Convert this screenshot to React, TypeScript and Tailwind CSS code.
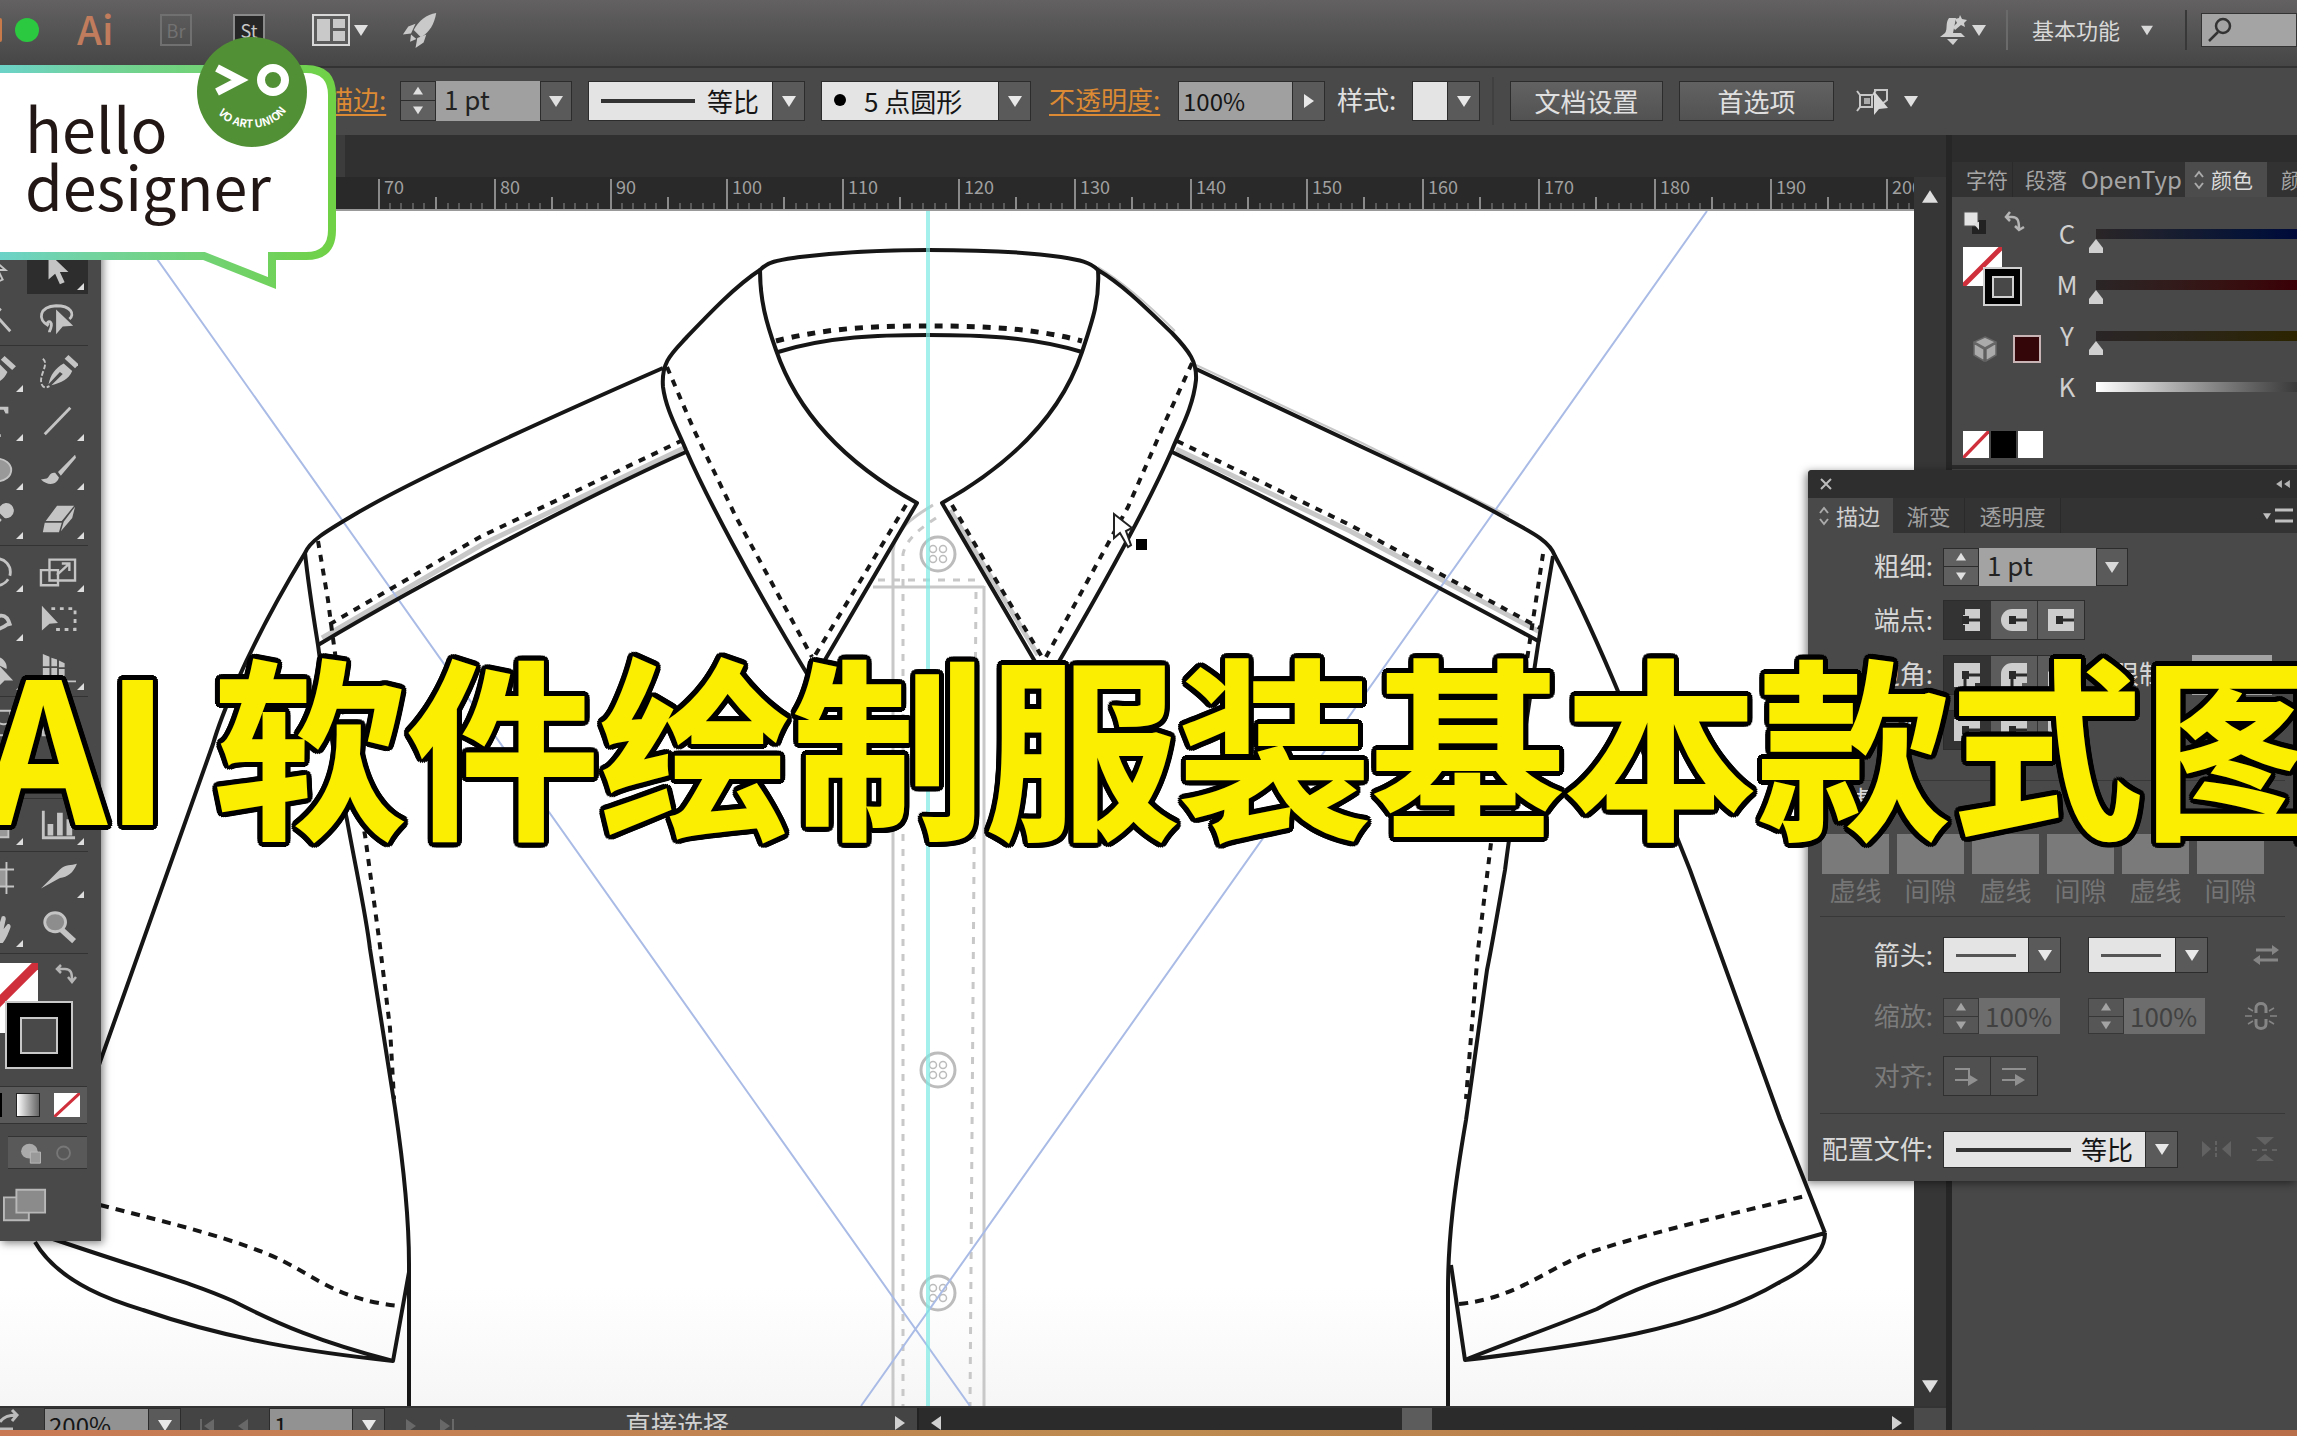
import type { ReactNode } from 'react';
import clsx from 'clsx';

type Dir = 'up' | 'down' | 'left' | 'right';

const caretPoints: Record<Dir, string> = {
  up: '0,12 7,1 14,12',
  down: '0,2 14,2 7,13',
  left: '12,0 2,7 12,14',
  right: '2,0 12,7 2,14',
};

const Caret = ({ dir = 'down', className = 'h-3.5 w-3.5' }: { dir?: Dir; className?: string }) => (
  <svg viewBox="0 0 14 14" className={clsx('shrink-0', className)} fill="currentColor">
    <polygon points={caretPoints[dir]} />
  </svg>
);

const Stepper = ({ label }: { label: string }) => (
  <div className="flex w-9 shrink-0 flex-col border border-[#2c2c2c] bg-[#606060] text-[#e0e0e0]">
    <button aria-label={`${label} +`} className="flex flex-1 items-center justify-center border-b border-[#2c2c2c]">
      <Caret dir="up" className="h-2.5 w-2.5" />
    </button>
    <button aria-label={`${label} -`} className="flex flex-1 items-center justify-center">
      <Caret className="h-2.5 w-2.5" />
    </button>
  </div>
);

type PickerProps = {
  label: string;
  value?: string;
  className?: string;
  selectClass?: string;
  line?: ReactNode;
  dir?: Dir;
};

// select box with the square arrow button on its right
const Picker = ({ label, value = '', className, selectClass = 'bg-[#e4e4e4]', line, dir = 'down' }: PickerProps) => (
  <div className={clsx('relative flex shrink-0 border border-[#2c2c2c] bg-[#5a5a5a]', className)}>
    <select aria-label={label} className={clsx('h-full min-w-0 flex-1 appearance-none leading-8 text-[#151515] outline-none', selectClass)}>
      <option>{value}</option>
    </select>
    {line}
    <span className="pointer-events-none flex w-8 shrink-0 items-center justify-center border-l border-[#2c2c2c] text-[#e8e8e8]">
      <Caret dir={dir} />
    </span>
  </div>
);

const NoneSwatch = ({ className }: { className?: string }) => (
  <svg viewBox="0 0 40 40" preserveAspectRatio="none" className={className}>
    <rect width="40" height="40" fill="#fff" />
    <path d="M0 40 40 0" stroke="#cf2f3a" strokeWidth="5" />
  </svg>
);

const RocketIcon = ({ className }: { className?: string }) => (
  <svg viewBox="0 0 40 40" className={className} fill="#c9c9c9">
    <path d="M38 1C27 3 19 9 13 20l8 8C31 22 36 13 38 1Z" />
    <path d="M15 13 7 16 1 25l9-1ZM27 25l-3 9-9 6 2-11ZM10 25l6 5-7 3Z" />
  </svg>
);

const TitleBar = () => (
  <header className="flex h-17 shrink-0 items-center border-b-2 border-[#333] bg-linear-to-b from-[#636161] to-[#464646] pb-1.5">
    <span className="h-6 w-0.5 rounded-r-full bg-[#c87a4a]" />
    <span className="ml-[13px] h-6 w-6 rounded-full bg-[#2bc940]" />
    <span className="ml-[38px] w-10 pb-1 text-[40px] leading-10 font-medium text-[#c07c5c]">Ai</span>
    <button className="ml-[43px] h-8 w-8 border-2 border-[#707070] text-lg leading-6 text-[#727272]">Br</button>
    <button className="ml-[41px] h-8 w-8 border-2 border-[#8a8a8a] bg-[#262626] text-lg leading-6 text-[#c8c8c8]">St</button>
    <button aria-label="排列文档" className="ml-[47px] flex items-center gap-1 text-[#e0e0e0]">
      <svg viewBox="0 0 38 32" className="h-8 w-[38px]">
        <rect x="1" y="1" width="36" height="30" fill="#5c5c5c" stroke="#d8d8d8" strokeWidth="2" />
        <path d="M5 5h13v22H5zM21 5h12v9H21zM21 17h12v10H21z" fill="#c9c9c9" />
      </svg>
      <Caret />
    </button>
    <button aria-label="GPU" className="ml-8">
      <RocketIcon className="h-9 w-10" />
    </button>
    <div className="ml-auto flex h-10 items-center text-[#d8d8d8]">
      <svg viewBox="0 0 28 30" className="h-8 w-7" fill="#cfcfcf">
        <path d="M9 3h7l-3 15h8l4 4H0l5-4C8 14 5 8 9 3ZM7 24h11l-5 6z" />
        <path d="m20 0 2 4 5 1-3 3 1 4-4-2-6 5-2-3 4-4-2-4 4-1Z" />
      </svg>
      <Caret className="ml-1 h-3.5 w-3.5" />
      <span className="ml-5 h-10 w-0.5 bg-[#6a6a6a]" />
      <label className="ml-6 flex items-center gap-5 text-[22px]">
        <select aria-label="工作区" className="appearance-none pb-0.5 outline-none">
          <option>基本功能</option>
        </select>
        <Caret className="h-3 w-3" />
      </label>
      <span className="ml-8 h-10 w-0.5 bg-[#383838]" />
      <div className="relative ml-3.5 h-[34px] w-24">
        <input aria-label="搜索" type="search" className="h-full w-full border border-[#333] bg-[#a4a4a4] pl-8 outline-none" />
        <svg viewBox="0 0 26 26" className="absolute top-1 left-1.5 h-6.5 w-6.5" fill="none" stroke="#333" strokeWidth="2.5">
          <circle cx="16" cy="9" r="7" />
          <path d="m11 15-9 9" />
        </svg>
      </div>
    </div>
  </header>
);

const ControlBar = () => (
  <div className="flex h-[67px] shrink-0 items-center bg-[#494949] pb-0.5 pl-[327px] text-[26px] text-[#e0e0e0]">
    <label htmlFor="weight" className="w-16 pb-1 text-[#dc8a33] underline underline-offset-4">描边:</label>
    <div className="ml-[9px] flex h-10">
      <Stepper label="描边粗细" />
      <input id="weight" defaultValue="1 pt" className="w-[104px] bg-[#a0a0a0] pb-1 pl-2 text-[26px] text-[#222] outline-none" />
      <button aria-label="描边列表" className="flex w-8 items-center justify-center border border-[#2c2c2c] bg-[#5a5a5a]">
        <Caret />
      </button>
    </div>
    <Picker
      label="宽度配置"
      value="等比"
      className="ml-4 h-10 w-[217px]"
      selectClass="bg-[#e4e4e4] pl-[118px]"
      line={<span className="absolute top-[17px] left-3 h-1 w-[94px] bg-[#333]" />}
    />
    <Picker
      label="画笔"
      value="5 点圆形"
      className="ml-4 h-10 w-[210px]"
      selectClass="bg-[#e4e4e4] pl-[42px]"
      line={<span className="absolute top-3 left-3 h-3 w-3 rounded-full bg-black" />}
    />
    <span className="ml-[18px] w-[115px] pb-1 text-[#dc8a33] underline underline-offset-4">不透明度:</span>
    <Picker label="不透明度" value="100%" dir="right" className="ml-3.5 h-10 w-[147px]" selectClass="bg-[#a0a0a0] pl-1 text-2xl" />
    <span className="ml-3 w-[63px] pb-1">样式:</span>
    <Picker label="样式" className="ml-3 h-10 w-[68px]" />
    <span className="ml-3 h-12 w-0.5 bg-[#404040]" />
    <button className="ml-4 h-10 w-[153px] border border-[#2c2c2c] bg-linear-to-b from-[#626262] to-[#525252] leading-8">文档设置</button>
    <button className="ml-4 h-10 w-[155px] border border-[#2c2c2c] bg-linear-to-b from-[#626262] to-[#525252] leading-8">首选项</button>
    <button aria-label="选择类似的对象" className="ml-[22px] flex items-center gap-3">
      <svg viewBox="0 0 36 28" className="h-7 w-9" stroke="#c8c8c8" strokeWidth="2" fill="none">
        <path d="M4 8h12v12H4zM1 4l3 4M1 24l3-4M20 3l-3 5M18 3h13v10l-5 4" />
        <path d="M8 11h6v6H8z" fill="#aaa" stroke="none" />
        <path d="M18 4v24l5-6 9-1Z" fill="#d8d8d8" stroke="none" />
      </svg>
      <Caret />
    </button>
  </div>
);

const rulerMarks = ['70', '80', '90', '100', '110', '120', '130', '140', '150', '160', '170', '180', '190', '200'];
const minorTicks = [12, 23, 35, 46, 70, 81, 93, 104];

const Ruler = () => (
  <div className="flex h-[34px] shrink-0 overflow-hidden border-b-2 border-[#999] bg-[#292929] pl-[378px]">
    {rulerMarks.map((mark) => (
      <div key={mark} className="relative w-[116px] shrink-0">
        <svg viewBox="0 0 116 32" className="absolute inset-0 h-8 w-[116px]" stroke="#8a8a8a" strokeWidth="2">
          <path d="M1 2v30M58 20v12" />
          {minorTicks.map((x) => (
            <path key={x} d={`M${x} 26v6`} strokeWidth="1" />
          ))}
        </svg>
        <span className="block pl-1.5 text-lg leading-[18px] text-[#a0a0a0]">{mark}</span>
      </div>
    ))}
  </div>
);

const ShirtButton = ({ cx, cy }: { cx: number; cy: number }) => (
  <g fill="none" stroke="#bcbcbc" strokeWidth="3">
    <circle cx={cx} cy={cy} r="17" />
    <g strokeWidth="1.5">
      <circle cx={cx - 5} cy={cy - 5} r="3.5" />
      <circle cx={cx + 5} cy={cy - 5} r="3.5" />
      <circle cx={cx - 5} cy={cy + 5} r="3.5" />
      <circle cx={cx + 5} cy={cy + 5} r="3.5" />
    </g>
  </g>
);

const Artwork = () => (
  <svg viewBox="0 211 1914 1195" preserveAspectRatio="xMinYMin slice" className="absolute inset-0 h-full w-full" fill="none">
    {/* template layer */}
    <g stroke="#c8c8c8" strokeWidth="3">
      <path d="M933 505c-20 12-38 24-40 46v855M984 586v820M873 587h111" />
      <path d="M936 518c-18 12-30 22-33 36v852M976 592 970 1406M878 580h100" strokeDasharray="7 8" />
      <path d="M950 510 1038 655M1176 449 1350 531 1540 632M686 447 483 544 322 638" strokeWidth="5" />
      <path d="M1098 267C1125 283 1152 308 1175 331M1196 365 1362 443 1509 516" strokeWidth="2" />
    </g>
    <ShirtButton cx={938} cy={554} />
    <ShirtButton cx={938} cy={1070} />
    <ShirtButton cx={938} cy={1293} />

    <path d="M123 211 970 1406M1707 211 861 1406" stroke="#aabce6" strokeWidth="2" />

    <g stroke="#161616" strokeWidth="4" strokeLinejoin="round">
      {/* collar */}
      <path d="M760 270C768 261 780 260 800 257 850 251 890 250 928 250S1020 251 1061 257C1080 260 1090 262 1098 270" />
      <path d="M760 270C735 286 705 318 686 338 672 353 661 362 663 387 666 410 678 430 686 450 705 494 750 580 812 682L917 503C843 462 797 412 776 350 766 322 760 300 760 270Z" />
      <path d="M1098 270C1125 286 1150 312 1172 333 1190 352 1197 362 1196 380 1193 408 1180 430 1172 450 1150 500 1110 575 1047 682L942 503C1015 462 1062 412 1082 352 1092 322 1100 300 1098 270Z" />
      <path d="M778 352C830 336 880 335 928 335S1030 336 1082 352" />
      {/* shoulders and sleeves */}
      <path d="M663 368C590 400 420 475 352 516 325 532 310 541 305 553 240 660 217 730 213 744L100 1062 40 1232" />
      <path d="M1196 369 1362 447C1420 474 1480 503 1509 520 1535 534 1550 542 1555 556 1600 640 1640 745 1690 870L1780 1119 1825 1233" />
      <path d="M686 452C600 490 430 578 318 645M1172 452C1260 494 1430 582 1540 642" />
      <path d="M305 553C309 590 314 620 318 645 328 720 336 770 347 820 358 880 366 915 370 949 380 1010 388 1064 395 1108 402 1155 409 1210 409 1264V1406" />
      <path d="M1553 556C1547 590 1542 620 1538 645 1526 725 1514 800 1505 870 1498 910 1493 940 1487 970 1480 1020 1473 1070 1466 1120 1454 1190 1448 1240 1448 1290V1406" />
      {/* cuffs */}
      <path d="M35 1242C60 1285 120 1303 143 1310 230 1340 310 1352 393 1361L409 1272M50 1238C150 1272 190 1282 233 1301 280 1325 320 1342 393 1361" />
      <path d="M1825 1233C1825 1255 1800 1272 1780 1282 1700 1330 1580 1346 1465 1360L1451 1265M1825 1233 1728 1260C1660 1280 1635 1288 1597 1309 1550 1328 1510 1342 1465 1360" />
    </g>

    {/* stitching */}
    <g stroke="#161616" strokeWidth="4" strokeDasharray="7 7">
      <path d="M776 341C830 327 880 326 928 326S1030 327 1082 341" strokeWidth="5" strokeDasharray="8 8" />
      <path d="M667 367 694 430 736 517 812 657M906 505 870 565 814 657" />
      <path d="M1192 363 1166 420 1128 507 1046 657M952 505 990 570 1042 657" />
      <path d="M683 440 480 537 325 627M1177 441 1350 525 1540 628" />
      <path d="M318 541 328 600C338 680 352 770 365 835L380 946 390 1028 394 1099" />
      <path d="M1543 554 1530 640C1518 720 1502 790 1491 843L1478 950 1466 1099" />
      <path d="M100 1205C170 1223 240 1240 283 1261 320 1280 340 1300 400 1306M1459 1304C1520 1298 1550 1265 1597 1250 1660 1230 1740 1212 1809 1195" strokeDasharray="9 7" />
    </g>

    <path d="M928 211v1195" stroke="#7ceae6" strokeOpacity=".7" strokeWidth="4" />
    <path d="M1114 514v24l6-5 8 14 3-2-5-14 6-3Z" fill="#fff" stroke="#222" strokeWidth="2" />
    <rect x="1136" y="539" width="11" height="11" fill="#000" />
  </svg>
);

const toolIcons: Record<string, ReactNode> = {
  select: <path d="M10 1v28l7-6 5 11 5-2-5-11h9Z" />,
  directOutline: <path d="M10 3v24l7-6 5 10 4-2-5-10h8Z" fill="none" stroke="#c4c4c4" strokeWidth="2" />,
  wand: <path d="m18 14 16 18M14 4l2 6M24 8l-4 4" fill="none" stroke="#c4c4c4" strokeWidth="3" />,
  lasso: (
    <>
      <path d="M10 26C-2 20 0 6 18 5c16 0 20 9 14 14M10 26c-4-5 4-6 3 0s-2 4-2 7" fill="none" stroke="#c4c4c4" strokeWidth="3" />
      <path d="M18 9v26l7-8 11-1Z" />
    </>
  ),
  pen: <path d="M4 34c3-12 6-19 18-24l9 9c-4 9-11 12-23 17l11-12-2-2ZM24 6l4-4 12 11-4 4Z" />,
  curvature: (
    <>
      <path d="M10 32C12 22 17 15 26 10l9 8c-4 9-11 12-22 15l12-12-3-2Z" />
      <path d="m27 5 4-4 11 10-4 4Z" />
      <path d="M4 5c8 6-7 20 0 29 2 2 5 1 7 0" fill="none" stroke="#c4c4c4" strokeWidth="2" strokeDasharray="5 2" />
    </>
  ),
  type: <path d="M4 4h28v7h-3l-2-4h-7v26h4v3H12v-3h4V7H9l-2 4H4Z" />,
  line: <path d="M6 33 33 5" fill="none" stroke="#c4c4c4" strokeWidth="3" />,
  ellipse: <ellipse cx="20" cy="19" rx="15" ry="12" fill="#999" stroke="#c4c4c4" strokeWidth="2" />,
  brush: <path d="M38 3 20 21l3 4L39 6ZM17 22c-6-1-6 5-9 6l-6 1c7 7 17 6 19-2Z" />,
  pencil: <path d="M2 36c2-8 8-16 17-22l6 6C19 28 10 34 2 36ZM22 12a8 8 0 1 1 6 6Z" />,
  eraser: <path d="M19 5 7 21h17L37 5ZM6 23 4 33h17l3-10ZM26 22l-3 10 12-14 3-12Z" />,
  rotate: <path d="M20 5a14 14 0 1 1-13 9" fill="none" stroke="#c4c4c4" strokeWidth="3" strokeDasharray="26 4" />,
  scale: (
    <g fill="none" stroke="#c4c4c4" strokeWidth="2.5">
      <path d="M11 6h27v22H11zM2 17h18v16H2z" />
      <path d="m19 22 12-11M24 10h8v8" />
    </g>
  ),
  width: <path d="M4 12c8-12 16-4 8 4s4 18 20 6M6 30C18 10 30 8 34 24" fill="none" stroke="#c4c4c4" strokeWidth="4" />,
  free: (
    <>
      <path d="M3 3v26l8-7 9-1Z" />
      <path d="M13 6h25v22H13" fill="none" stroke="#c4c4c4" strokeWidth="3" strokeDasharray="4 5" />
    </>
  ),
  shaper: <path d="M6 6c16-6 26 4 24 12M22 14v22l6-6h9Z" />,
  perspective: <path d="M4 2l7 3v10H4zM13 6l6 2v7h-6zM21 9l6 3v4h-6zM4 17h7v9H4zM13 17h6v8h-6zM21 18h6v7h-6zM27 30h12v2H27z" />,
  mesh: <path d="M4 6h30v26H4zM4 18c10-8 20 8 30 0M18 6c-8 9 8 18 0 26" fill="none" stroke="#c4c4c4" strokeWidth="2" />,
  gradient: <path d="M4 6h32v26H4z" fill="#999" stroke="#c4c4c4" strokeWidth="2" />,
  dropper: <path d="m4 34 3-9L20 12l6 6-13 13ZM22 8l6-6c6-2 9 4 8 8l-6 6Z" />,
  blend: <path d="M4 20h14v14H4zM10 12h14v14M18 4h18v18" fill="none" stroke="#c4c4c4" strokeWidth="3" />,
  symbol: <path d="M12 12h20v20H12zM6 4h10v6H6z" fill="#999" stroke="#c4c4c4" strokeWidth="2" />,
  graph: <path d="M3 4h3v27h32v3H3ZM9 18h6v12H9zM19 6h6v24h-6zM29 13h6v17h-6z" />,
  artboard: <path d="M12 2v34M30 2v34M2 10h36M2 28h36M12 10h18v18H12z" fill="#999" stroke="#c4c4c4" strokeWidth="2" />,
  slice: <path d="M2 30 22 10c6-6 12-4 18-6-4 10-10 14-18 15ZM18 16l4 4" />,
  hand: <path d="M12 36c-4-6-8-12-8-16 4-1 5 3 7 4V8c3-3 5 0 5 3l1 7V5c3-3 5 0 5 3v10l3-10c3-2 5 1 4 4l-2 9 4-5c3-1 4 2 3 4-3 8-5 12-8 16Z" />,
  zoom: (
    <>
      <ellipse cx="17" cy="14" rx="11" ry="10" fill="#8d8d8d" stroke="#c4c4c4" strokeWidth="3" />
      <path d="m24 22 13 12" stroke="#c4c4c4" strokeWidth="6" />
    </>
  ),
};

// pairs of tools; null draws a divider between groups
const toolRows: ([string, string] | null)[] = [
  ['directOutline', 'select'],
  ['wand', 'lasso'],
  null,
  ['pen', 'curvature'],
  ['type', 'line'],
  ['ellipse', 'brush'],
  ['pencil', 'eraser'],
  null,
  ['rotate', 'scale'],
  ['width', 'free'],
  ['shaper', 'perspective'],
  null,
  ['mesh', 'gradient'],
  ['dropper', 'blend'],
  null,
  ['symbol', 'graph'],
  null,
  ['artboard', 'slice'],
  ['hand', 'zoom'],
  null,
];

const noFlyout = ['lasso', 'curvature', 'free', 'zoom', 'wand', 'directOutline', 'artboard'];

const ToolButton = ({ name }: { name: string }) => (
  <button aria-label={name} className={clsx('relative flex h-[49px] items-center justify-center', name === 'select' && 'bg-[#2d2d2d]')}>
    <svg viewBox="0 0 40 38" className="h-9 w-10" fill="#c4c4c4">
      {toolIcons[name]}
    </svg>
    {!noFlyout.includes(name) && (
      <svg viewBox="0 0 7 7" className="absolute right-1 bottom-1 h-[7px] w-[7px]" fill="#ddd">
        <path d="M7 0v7H0Z" />
      </svg>
    )}
  </button>
);

const ToolPanel = () => (
  <aside className="absolute top-0 left-0 z-10 h-[1030px] w-[101px] overflow-hidden bg-[#494949] pt-[34px] shadow-[2px_2px_8px_rgba(0,0,0,0.5)]">
    <div className="-ml-[34px] w-[122px]">
      {toolRows.map((row, i) =>
        row ? (
          <div key={i} className="grid grid-cols-2">
            <ToolButton name={row[0]} />
            <ToolButton name={row[1]} />
          </div>
        ) : (
          <div key={i} className="mt-0.5 mb-px h-px bg-[#333]" />
        ),
      )}
    </div>
    <div className="relative h-[123px]">
      <NoneSwatch className="absolute top-2 -left-8 h-[70px] w-[70px]" />
      <svg viewBox="0 0 24 24" className="absolute top-2 left-[54px] h-6 w-6" fill="none" stroke="#b5b5b5" strokeWidth="2.5">
        <path d="M3 6h8c6 0 7 4 7 11M7 2 3 6l4 4M14 14l4 5 4-5" />
      </svg>
      <div className="absolute top-[46px] left-[5px] flex h-[68px] w-[68px] items-center justify-center border-2 border-[#c8c8c8] bg-black">
        <span className="h-[37px] w-[38px] border-2 border-[#c8c8c8] bg-[#494949]" />
      </div>
    </div>
    <div className="mt-2 flex h-[38px] w-[87px] items-center border-y border-[#333] bg-[#5a5a5a]">
      <span className="h-6 w-0.5 bg-black" />
      <button aria-label="渐变" className="ml-[14px] h-6 w-6 border border-[#222] bg-linear-to-r from-white to-[#666]" />
      <button aria-label="无" className="ml-[14px] h-6 w-[26px]">
        <NoneSwatch className="h-6 w-[26px]" />
      </button>
    </div>
    <div className="mt-3 ml-2 flex h-[33px] w-[79px] items-center border-y border-[#333] bg-[#595959] pl-2">
      <svg viewBox="0 0 60 26" className="h-6 w-15">
        <ellipse cx="12" cy="11" rx="9" ry="8" fill="#aaa" />
        <path d="M13 12h11v12H13z" fill="#999" stroke="#bbb" />
        <ellipse cx="49" cy="13" rx="7" ry="7" fill="none" stroke="#777" strokeWidth="2" />
      </svg>
    </div>
    <svg viewBox="0 0 46 36" className="mt-[18px] ml-[3px] h-9 w-[44px]" stroke="#b8b8b8" strokeWidth="2" fill="#777">
      <path d="M1 10h26v24H1z" />
      <path d="M14 2h30v24H14z" fill="#8b8b8b" />
    </svg>
  </aside>
);

const StatusBar = () => (
  <footer className="flex h-6 shrink-0 items-start overflow-hidden border-t-2 border-[#333] bg-[#444] text-2xl text-[#d0d0d0]">
    <svg viewBox="0 0 20 24" className="h-6 w-5" fill="none" stroke="#bbb" strokeWidth="3">
      <path d="M0 14C4 8 10 7 16 7M12 2l5 5-5 6M0 21h13" />
    </svg>
    <Picker label="缩放" value="200%" className="ml-6 h-[34px] w-[137px]" selectClass="bg-[#929292] pl-1" />
    <div className="flex h-9 w-[88px] items-center justify-center gap-5 text-[#686868]">
      <button aria-label="首页" className="flex border-l-2"><Caret dir="left" /></button>
      <button aria-label="上一页"><Caret dir="left" /></button>
    </div>
    <Picker label="画板" value="1" className="h-[34px] w-[116px]" selectClass="bg-[#929292] pl-1" />
    <div className="flex h-9 w-[88px] items-center justify-center gap-5 text-[#686868]">
      <button aria-label="下一页"><Caret dir="right" /></button>
      <button aria-label="末页" className="flex border-r-2"><Caret dir="right" /></button>
    </div>
    <span className="ml-[152px] text-[26px] leading-8">直接选择</span>
    <Caret dir="right" className="mt-2 ml-[164px] h-3.5 w-3.5" />
    <div className="ml-2.5 flex h-full flex-1 items-start justify-between border-l-2 border-[#222] bg-[#2b2b2b] px-2.5 pt-2">
      <Caret dir="left" />
      <span className="-mt-2 h-9 w-[30px] bg-[#5c5c5c]" />
      <Caret dir="right" />
    </div>
    <span className="h-full w-8 bg-[#4a4a4a]" />
  </footer>
);

const channels = [
  { name: 'C', track: 'bg-linear-to-r from-[#2a2526] to-[#00093a]' },
  { name: 'M', track: 'bg-linear-to-r from-[#2a2526] to-[#3a0006]' },
  { name: 'Y', track: 'bg-linear-to-r from-[#2a2526] to-[#2c2400]' },
  { name: 'K', track: 'bg-linear-to-r from-white to-[#3a3a3a]' },
];

const SortMark = () => (
  <svg viewBox="0 0 12 20" className="h-5 w-3 shrink-0" fill="none" stroke="#aaa" strokeWidth="2">
    <path d="M2 7l4-5 4 5M2 13l4 5 4-5" />
  </svg>
);

const ColorPanel = () => (
  <section className="flex w-[351px] shrink-0 flex-col overflow-hidden border-l-6 border-[#262626] bg-[#484848]">
    <div className="h-[27px] shrink-0 bg-[#2c2c2c]" />
    <div role="tablist" className="flex h-[35px] shrink-0 bg-[#323232] text-[21px] whitespace-nowrap text-[#a5a5a5]">
      <button role="tab" className="w-[61px] shrink-0 border-r border-[#2a2a2a] pl-2.5">字符</button>
      <button role="tab" className="w-[62px] shrink-0 pl-1">段落</button>
      <button role="tab" className="w-[110px] shrink-0 pb-0.5 pl-1.5 text-left text-2xl">OpenTyp</button>
      <button role="tab" aria-selected="true" className="flex w-[82px] shrink-0 items-center gap-1.5 bg-[#4c4c4c] pl-2 text-[#dcdcdc]">
        <SortMark />颜色
      </button>
      <button role="tab" className="shrink-0 pl-3.5">颜色</button>
    </div>
    <div className="flex h-[272px] shrink-0 border-b-4 border-[#2c2c2c] pt-3.5">
      <div className="ml-[11px] w-20">
        <div className="flex gap-4">
          <svg viewBox="0 0 24 24" className="h-6 w-6">
            <path d="M9 9h14v14H9z" fill="#222" />
            <path d="M1 1h14v14H1z" fill="#e4e4e4" stroke="#555" />
            <path d="m10 12 6 7v-8Z" fill="#ddd" />
          </svg>
          <svg viewBox="0 0 24 24" className="h-6 w-6" fill="none" stroke="#b5b5b5" strokeWidth="2.5">
            <path d="M3 6h6c6 0 7 4 7 12M7 1 3 6l4 4M12 15l4 4 5-3" />
          </svg>
        </div>
        <div className="relative mt-3 h-[60px]">
          <NoneSwatch className="h-[39px] w-[39px]" />
          <div className="absolute top-5 left-5 flex h-[39px] w-[39px] items-center justify-center border-2 border-[#d0d0d0] bg-black">
            <span className="h-[22px] w-[22px] border-2 border-[#d0d0d0] bg-[#484848]" />
          </div>
        </div>
        <div className="mt-7 flex items-center gap-4 pl-2.5">
          <svg viewBox="0 0 24 26" className="h-6.5 w-6" fill="#aaa" stroke="#666" strokeWidth="1.5">
            <path d="M12 1 23 6 12 12 1 6ZM1 7v12l10 6V13ZM23 7v12l-10 6V13Z" />
          </svg>
          <span className="h-7 w-7 border-2 border-[#c8b4b4] bg-[#34060a]" />
        </div>
        <div className="mt-[68px] flex gap-0.5">
          <NoneSwatch className="h-[27px] w-[26px]" />
          <span className="h-[27px] w-[25px] bg-black" />
          <span className="h-[27px] w-[25px] bg-white" />
        </div>
      </div>
      <div className="ml-3 flex-1">
        {channels.map((c) => (
          <label key={c.name} className="flex h-[51px] items-start text-[26px] leading-6 text-[#cfcfcf]">
            <span className="w-6 pt-2.5 text-center">{c.name}</span>
            <span className="relative mt-[18px] ml-[17px] flex-1">
              <span className={clsx('block h-2.5', c.track)} />
              {c.name !== 'K' && (
                <svg viewBox="0 0 16 14" className="absolute top-2.5 -left-2 h-3.5 w-4" fill="#d0d0d0">
                  <path d="M8 0 15 9v5H1V9Z" />
                </svg>
              )}
              <input type="range" defaultValue={0} className="absolute inset-0 w-full opacity-0" />
            </span>
          </label>
        ))}
      </div>
    </div>
  </section>
);

const RowLabel = ({ children, dim, htmlFor }: { children: ReactNode; dim?: boolean; htmlFor?: string }) => (
  <label htmlFor={htmlFor} className={clsx('mr-2.5 w-[125px] shrink-0 pb-1 text-right', dim ? 'text-[#7c7c7c]' : 'text-[#d8d8d8]')}>
    {children}
  </label>
);

type CapButtonProps = { label: string; active?: boolean; d: string; slit?: string };

const CapButton = ({ label, active, d, slit = 'M12 12h15' }: CapButtonProps) => (
  <button aria-label={label} className={clsx('flex h-full w-[46px] items-center justify-center', active ? 'bg-[#333]' : 'bg-[#5c5c5c]')}>
    <svg viewBox="0 0 28 24" className="h-6 w-7">
      <path d={d} fill="#cdcdcd" />
      <path d={slit} fill="none" stroke="#2a2a2a" strokeWidth="3" />
      <path d="M9 8h7v8H9z" fill="#2a2a2a" />
    </svg>
  </button>
);

const butt = 'M12 1h15v22H12V17H10V7h2Z';
const round = 'M12 1h15v22H12a11 11 0 0 1 0-22Z';
const square = 'M1 1h26v22H1Z';
const corner = 'M1 0h26v20h-5v4H1Z';
const cornerRound = 'M12 0h15v20h-5v4H1V11A11 11 0 0 1 12 0Z';
const cornerBevel = 'M10 0h17v20h-5v4H1V9Z';
const cornerSlit = 'M12 24V12h15';

const DisabledScale = ({ label, className }: { label: string; className?: string }) => (
  <div className={clsx('flex h-9 opacity-60', className)}>
    <Stepper label={label} />
    <input aria-label={label} disabled defaultValue="100%" className="w-[81px] bg-[#858585] pb-0.5 pl-1.5 text-[26px] text-[#3c3c3c]" />
  </div>
);

const arrowLine = <span className="absolute top-4 left-3 h-[3px] w-15 bg-[#555]" />;

const StrokePanel = () => (
  <section className="absolute top-[470px] right-0 z-20 h-[711px] w-[489px] rounded-tl bg-[#494949] text-[26px] text-[#d8d8d8] shadow-[-2px_2px_8px_rgba(0,0,0,0.5)]">
    <div className="flex h-7 items-center justify-between rounded-tl bg-[#2e2e2e] pr-1.5 pl-3">
      <button aria-label="关闭">
        <svg viewBox="0 0 12 12" className="h-3 w-3" stroke="#bbb" strokeWidth="2">
          <path d="m1 1 10 10M11 1 1 11" />
        </svg>
      </button>
      <button aria-label="折叠" className="flex text-[#b5b5b5]">
        <Caret dir="left" className="h-2.5 w-2" />
        <Caret dir="left" className="h-2.5 w-2" />
      </button>
    </div>
    <div role="tablist" className="flex h-[35px] items-stretch bg-[#333] text-[22px] text-[#a0a0a0]">
      <button role="tab" aria-selected="true" className="flex w-[85px] items-center gap-1.5 bg-[#494949] pl-2.5 text-[#d0d0d0]">
        <SortMark />描边
      </button>
      <button role="tab" className="w-[72px] border-r border-[#2a2a2a]">渐变</button>
      <button role="tab" className="w-[96px] border-r border-[#2a2a2a]">透明度</button>
      <button aria-label="面板菜单" className="mr-1 ml-auto flex items-center gap-1 text-[#c0c0c0]">
        <Caret className="h-2 w-2" />
        <svg viewBox="0 0 18 16" className="h-4 w-[18px]" stroke="currentColor" strokeWidth="3">
          <path d="M0 2h18M0 13h18" />
        </svg>
      </button>
    </div>

    <div className="flex h-[53px] items-center pt-3.5">
      <RowLabel htmlFor="panel-weight">粗细:</RowLabel>
      <div className="flex h-[38px]">
        <Stepper label="粗细" />
        <input id="panel-weight" defaultValue="1 pt" className="w-[117px] bg-[#a3a3a3] pb-1 pl-2 text-[#222] outline-none" />
        <button aria-label="粗细列表" className="flex w-8 items-center justify-center border border-[#2c2c2c] bg-[#5a5a5a]">
          <Caret />
        </button>
      </div>
    </div>
    <div className="flex h-[54px] items-center pt-3.5">
      <RowLabel>端点:</RowLabel>
      <div className="flex h-10 gap-px border border-[#2c2c2c] bg-[#333]">
        <CapButton label="平头端点" active d={butt} />
        <CapButton label="圆头端点" d={round} />
        <CapButton label="方头端点" d={square} />
      </div>
    </div>
    <div className="flex h-[55px] items-center pt-3.5">
      <RowLabel>边角:</RowLabel>
      <div className="flex h-10 gap-px border border-[#2c2c2c] bg-[#333]">
        <CapButton label="斜接连接" active d={corner} slit={cornerSlit} />
        <CapButton label="圆角连接" d={cornerRound} slit={cornerSlit} />
        <CapButton label="斜角连接" d={cornerBevel} slit={cornerSlit} />
      </div>
      <label htmlFor="miter" className="ml-7 pb-1">限制:</label>
      <input id="miter" defaultValue="10" className="ml-5 h-10 w-[80px] bg-[#a3a3a3] pl-2 text-[#222]" />
    </div>
    <div className="flex h-[56px] items-center pt-3.5">
      <RowLabel>对齐描边:</RowLabel>
      <div className="flex h-10 gap-px border border-[#2c2c2c] bg-[#333]">
        <CapButton label="居中对齐" active d={square} />
        <CapButton label="内侧对齐" d={square} />
        <CapButton label="外侧对齐" d={square} />
      </div>
    </div>
    <div className="mx-3 mt-[29px] flex h-[54px] items-start gap-2 border-t border-[#383838]">
      <input id="dashed" type="checkbox" className="mt-2 h-5 w-5 appearance-none border border-[#222] bg-[#a0a0a0]" />
      <label htmlFor="dashed" className="leading-9">虚线</label>
    </div>
    <div className="flex gap-2 px-3.5">
      {['虚线', '间隙', '虚线', '间隙', '虚线', '间隙'].map((name, i) => (
        <label key={i} className="flex w-[67px] flex-col items-center text-[#757575]">
          <input disabled className="h-10 w-full bg-[#7a7a7a]" />
          <span className="leading-8">{name}</span>
        </label>
      ))}
    </div>

    <div className="mx-3 mt-2.5 border-t border-[#383838]" />
    <div className="flex h-[76px] items-center">
      <RowLabel>箭头:</RowLabel>
      <Picker label="起点箭头" className="h-9 w-[118px]" line={arrowLine} />
      <Picker label="终点箭头" className="ml-[27px] h-9 w-[120px]" line={arrowLine} />
      <svg viewBox="0 0 28 22" className="ml-11 h-5.5 w-7" stroke="#858585" strokeWidth="3" fill="#858585">
        <path d="M4 6h16M8 16h18" />
        <path d="m20 1 7 5-7 5ZM8 11l-7 5 7 5Z" stroke="none" />
      </svg>
    </div>
    <div className="flex h-[46px] items-center">
      <RowLabel dim>缩放:</RowLabel>
      <DisabledScale label="起点缩放" />
      <DisabledScale label="终点缩放" className="ml-7" />
      <svg viewBox="0 0 32 30" className="ml-10 h-[30px] w-8" stroke="#858585" strokeWidth="3" fill="none">
        <path d="M11 12V7c0-6 10-6 10 0v5M11 18v5c0 6 10 6 10 0v-5" />
        <path d="M0 15h7M25 15h7M3 7l5 3M29 7l-5 3M3 23l5-3M29 23l-5-3" strokeWidth="1.5" />
      </svg>
    </div>
    <div className="flex h-[74px] items-center">
      <RowLabel dim>对齐:</RowLabel>
      {['M2 4h14v9M2 15h16', 'M2 4h24M2 15h16'].map((d) => (
        <button key={d} aria-label="箭头对齐" disabled className="-mr-px flex h-10 w-12 items-center justify-center border border-[#303030] bg-[#505050]">
          <svg viewBox="0 0 28 22" className="h-5.5 w-7" fill="none" stroke="#909090" strokeWidth="2">
            <path d={d} />
            <path d="m15 9 10 6-10 6Z" fill="#909090" stroke="none" />
          </svg>
        </button>
      ))}
    </div>
    <div className="mx-3 border-t border-[#383838]" />
    <div className="flex h-[70px] items-center">
      <RowLabel>配置文件:</RowLabel>
      <Picker
        label="配置文件"
        value="等比"
        className="h-[37px] w-[235px]"
        selectClass="bg-[#e4e4e4] pl-[137px]"
        line={<span className="absolute top-4 left-3 h-1 w-[115px] bg-[#333]" />}
      />
      <svg viewBox="0 0 76 28" className="ml-6 h-7 w-[76px]" fill="#626262">
        <path d="M0 6v16l9-8ZM29 6v16l-9-8ZM13 6h2v4h-2zM13 12h2v4h-2zM13 18h2v4h-2z" />
        <path d="M54 2h18l-9 8ZM54 26h18l-9-7ZM50 14h5v2h-5zM60 14h5v2h-5zM70 14h5v2h-5z" />
      </svg>
    </div>
  </section>
);

const HelloBadge = () => (
  <div className="absolute top-9 left-0 z-30 h-[256px] w-[340px] text-[#221714]">
    <svg viewBox="0 36 340 256" className="absolute inset-0 h-full w-full">
      <defs>
        <linearGradient id="bubble" x1="0" x2="1">
          <stop offset="0" stopColor="#6ad2d6" />
          <stop offset=".35" stopColor="#72d39c" />
          <stop offset="1" stopColor="#70d146" />
        </linearGradient>
        <path id="smile" d="M216 110a38 28 0 0 0 72-3" />
      </defs>
      <path
        d="M-30 69H306Q332 69 332 95V230Q332 256 306 256H272V283L204 256H-30Z"
        fill="#fff"
        stroke="url(#bubble)"
        strokeWidth="8"
      />
      <circle cx="252" cy="92" r="55" fill="#529036" />
      <path d="m217 68 23 12-23 12" fill="none" stroke="#fff" strokeWidth="8" />
      <circle cx="273" cy="80" r="12" fill="none" stroke="#fff" strokeWidth="8" />
      <text fill="#fff" fontSize="11" fontWeight="700" fontFamily="Noto Sans CJK SC">
        <textPath href="#smile" startOffset="50%" textAnchor="middle">VO ART UNION</textPath>
      </text>
    </svg>
    <p className="relative pt-[62px] pl-[25px] text-[61px] leading-[58px]">
      hello
      <br />
      designer
    </p>
  </div>
);

// round black outline built from shadows spread on a circle
const outline =
  '[text-shadow:6px_0_#000,6px_2px_#000,5px_4px_#000,4px_5px_#000,2px_6px_#000,0_6px_#000,-2px_6px_#000,-4px_5px_#000,-5px_4px_#000,-6px_2px_#000,-6px_0_#000,-6px_-2px_#000,-5px_-4px_#000,-4px_-5px_#000,-2px_-6px_#000,0_-6px_#000,2px_-6px_#000,4px_-5px_#000,5px_-4px_#000,6px_-2px_#000]';

const App = () => (
  <div className="relative flex h-screen flex-col overflow-hidden bg-[#444] font-['Noto_Sans_CJK_SC',sans-serif]">
    <TitleBar />
    <ControlBar />
    <div className="flex min-h-0 flex-1">
      <div className="flex min-w-0 flex-1 flex-col">
        <div className="flex h-[42px] shrink-0 bg-[#303030]">
          <span className="w-[345px] bg-[#3c3c3c]" />
        </div>
        <div className="flex min-h-0 flex-1">
          <div className="flex min-w-0 flex-1 flex-col">
            <Ruler />
            <main className="relative min-h-0 flex-1 bg-linear-to-b from-white from-90% to-[#f6f6f6]">
              <Artwork />
              <ToolPanel />
            </main>
          </div>
          <div className="flex w-8 shrink-0 flex-col items-center justify-between bg-[#363636] py-3 text-[#dedede]">
            <Caret dir="up" className="h-4 w-[18px]" />
            <Caret className="h-4 w-[18px]" />
          </div>
        </div>
        <StatusBar />
      </div>
      <ColorPanel />
    </div>
    <div className="h-1.5 shrink-0 bg-linear-to-r from-[#c97a55] via-[#bd8b50] to-[#b96f4a]" />
    <StrokePanel />
    <HelloBadge />
    <h1 className={clsx('absolute top-[644px] -left-[18px] z-40 text-[193px] leading-none font-bold whitespace-nowrap text-[#fcee00] [-webkit-text-stroke:2px_#fcee00]', outline)}>
      AI 软件绘制服装基本款式图
    </h1>
  </div>
);

export default App;
